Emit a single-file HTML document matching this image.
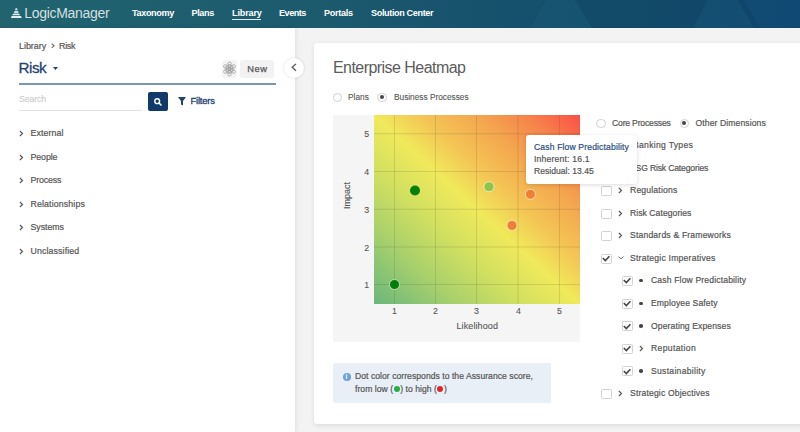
<!DOCTYPE html>
<html><head><meta charset="utf-8">
<style>
*{margin:0;padding:0;box-sizing:border-box}
html,body{width:800px;height:432px;overflow:hidden;background:#f3f3f3;font-family:"Liberation Sans",sans-serif}
.abs{position:absolute}
#hdr{left:0;top:0;width:800px;height:28px;background:linear-gradient(90deg,#21646f 0%,#1c5a6e 40%,#15506c 65%,#10486f 100%);overflow:hidden}
.nav{top:7.2px;font-size:9.1px;font-weight:bold;color:#fff;white-space:nowrap;line-height:12px;letter-spacing:-0.5px}
#left{left:0;top:28px;width:295px;height:404px;background:#fff;box-shadow:1px 0 5px rgba(0,0,0,0.09)}
.gray{color:#555}
.item{left:19px;font-size:8.8px;color:#555;line-height:12px;white-space:nowrap;-webkit-text-stroke:0.2px currentColor}
.item .chev{display:inline-block;width:11.5px}
#card{left:314px;top:42.5px;width:520px;height:381px;background:#fff;border-radius:3px;box-shadow:0 1.5px 5px rgba(0,0,0,0.09)}
.t9{font-size:8.6px;color:#555;white-space:nowrap;line-height:11px;-webkit-text-stroke:0.2px currentColor}
.radio{width:9.5px;height:9.5px;border:1px solid #d0d0d0;border-radius:50%;background:#fff}
.radio.on::after{content:"";position:absolute;left:1.75px;top:1.75px;width:4px;height:4px;border-radius:50%;background:#444}
.cb{width:10.5px;height:10px;border:1px solid #d2d2d2;border-radius:1.5px;background:#fff}
</style></head>
<body>
<div id="hdr" class="abs">
  <svg class="abs" style="left:0;top:0" width="800" height="28">
    <polygon points="546,0 575,0 592,28 531,28" fill="rgba(40,120,150,0.13)"/>
    <polygon points="708,0 738,0 754,28 693,28" fill="rgba(40,120,160,0.10)"/>
    <polygon points="575,0 708,0 693,28 592,28" fill="rgba(0,10,30,0.05)"/>
    <polygon points="738,0 800,0 800,28 754,28" fill="rgba(20,90,170,0.08)"/>
    <polygon points="738,0 744,0 760,28 754,28" fill="rgba(0,10,30,0.07)"/>
  </svg>
  <svg class="abs" style="left:10px;top:8px" width="13" height="11" viewBox="0 0 13 11">
    <polygon points="5.6,0.3 7.1,0.3 7.7,2.2 5,2.2" fill="#d8e6e6"/>
    <polygon points="4.5,2.9 8,2.9 8.8,5.2 3.7,5.2" fill="#c9dcdd"/>
    <polygon points="3,5.7 9.3,5.7 10.1,7.3 2.2,7.3" fill="#e3eeee"/>
    <polygon points="1.6,7.9 11,7.9 11.8,10 0.9,10" fill="#e3eeee"/>
  </svg>
  <div class="abs" style="left:24.3px;top:3.6px;font-size:14px;color:rgba(236,244,244,0.88);line-height:18px;letter-spacing:-0.316px">LogicManager</div>
  <div class="abs nav" style="left:132px;letter-spacing:-0.359px">Taxonomy</div>
  <div class="abs nav" style="left:191.5px;letter-spacing:-0.391px">Plans</div>
  <div class="abs nav" style="left:232px;letter-spacing:-0.157px">Library</div>
  <div class="abs" style="left:232px;top:19px;width:29px;height:1px;background:#dfe9ea"></div>
  <div class="abs nav" style="left:279px;letter-spacing:-0.486px">Events</div>
  <div class="abs nav" style="left:324px;letter-spacing:-0.316px">Portals</div>
  <div class="abs nav" style="left:371px;letter-spacing:-0.368px">Solution Center</div>
</div>

<div id="left" class="abs"></div>
<div class="abs" style="left:19px;top:40px;font-size:9px;line-height:12px;color:#555;letter-spacing:-0.05px;-webkit-text-stroke:0.2px #555">Library</div><svg class="abs" style="left:51.3px;top:43.2px" width="4" height="6" viewBox="0 0 4 6"><polyline points="0.7,0.7 3.1,2.75 0.7,4.8" fill="none" stroke="#666" stroke-width="1.05"/></svg><div class="abs" style="left:59px;top:40px;font-size:9px;line-height:12px;color:#555;letter-spacing:-0.35px;-webkit-text-stroke:0.2px #555">Risk</div>
<div class="abs" style="left:18.5px;top:58.8px;font-size:15.2px;line-height:18px;color:#1e4273;letter-spacing:-0.45px;-webkit-text-stroke:0.3px #1e4273">Risk</div>
<svg class="abs" style="left:53px;top:67px" width="6" height="4"><polygon points="0,0 5,0 2.5,3" fill="#1e4273"/></svg>
<div class="abs" style="left:222px;top:60px;width:15px;height:18px;background:#f4f4f4;border-radius:3px"></div>
<svg class="abs" style="left:222px;top:61px" width="15" height="16" viewBox="0 0 15 16"><g fill="none" stroke="#8a8a8a" stroke-width="0.6"><circle cx="7.50" cy="8.00" r="1.75"/><circle cx="7.50" cy="5.27" r="1.75"/><circle cx="5.36" cy="6.63" r="1.75"/><circle cx="5.36" cy="9.37" r="1.75"/><circle cx="7.50" cy="10.73" r="1.75"/><circle cx="9.64" cy="9.37" r="1.75"/><circle cx="9.64" cy="6.63" r="1.75"/><circle cx="7.50" cy="2.75" r="1.75"/><circle cx="3.39" cy="5.38" r="1.75"/><circle cx="3.39" cy="10.62" r="1.75"/><circle cx="7.50" cy="13.25" r="1.75"/><circle cx="11.61" cy="10.63" r="1.75"/><circle cx="11.61" cy="5.38" r="1.75"/></g></svg>
<div class="abs" style="left:239.5px;top:60px;width:34.5px;height:18px;background:#f2f2f2;border-radius:3px;font-size:9.3px;color:#555;text-align:center;line-height:18px;letter-spacing:0.55px;padding-left:1.2px;-webkit-text-stroke:0.25px #555">New</div>
<div class="abs" style="left:19px;top:83px;width:257px;height:1.5px;background:#7b95b5"></div>
<div class="abs" style="left:19px;top:93.3px;font-size:8.8px;line-height:12px;color:#c4c4c4;letter-spacing:-0.135px">Search</div>
<div class="abs" style="left:19px;top:110px;width:123px;height:1px;background:#e2e2e2"></div>
<div class="abs" style="left:148px;top:92px;width:20px;height:19px;background:#11396a;border-radius:2px"></div>
<svg class="abs" style="left:153px;top:97px" width="10" height="10" viewBox="0 0 10 10"><circle cx="4.2" cy="4.2" r="2.4" fill="none" stroke="#fff" stroke-width="1.4"/><line x1="6" y1="6" x2="8" y2="8" stroke="#fff" stroke-width="1.6" stroke-linecap="round"/></svg>
<svg class="abs" style="left:178px;top:96.5px" width="9" height="9" viewBox="0 0 9 9"><polygon points="0,0 8,0 5,4 5,8.5 3,7.5 3,4" fill="#1e4273"/></svg>
<div class="abs" style="left:190.5px;top:95px;font-size:9.3px;line-height:12px;color:#1e4273;-webkit-text-stroke:0.35px #1e4273;letter-spacing:-0.15px">Filters</div>

<div class="abs item" style="top:127px;left:30.5px;letter-spacing:0.088px">External</div>
<svg class="abs" style="left:18.8px;top:130.1px" width="5" height="7" viewBox="0 0 5 7"><polyline points="0.9,1 3.5,3.5 0.9,6" fill="none" stroke="#555" stroke-width="1.15"/></svg>
<div class="abs item" style="top:150.5px;left:30.5px;letter-spacing:-0.081px">People</div>
<svg class="abs" style="left:18.8px;top:153.6px" width="5" height="7" viewBox="0 0 5 7"><polyline points="0.9,1 3.5,3.5 0.9,6" fill="none" stroke="#555" stroke-width="1.15"/></svg>
<div class="abs item" style="top:174px;left:30.5px;letter-spacing:-0.130px">Process</div>
<svg class="abs" style="left:18.8px;top:177.1px" width="5" height="7" viewBox="0 0 5 7"><polyline points="0.9,1 3.5,3.5 0.9,6" fill="none" stroke="#555" stroke-width="1.15"/></svg>
<div class="abs item" style="top:197.5px;left:30.5px;letter-spacing:0.124px">Relationships</div>
<svg class="abs" style="left:18.8px;top:200.6px" width="5" height="7" viewBox="0 0 5 7"><polyline points="0.9,1 3.5,3.5 0.9,6" fill="none" stroke="#555" stroke-width="1.15"/></svg>
<div class="abs item" style="top:221px;left:30.5px;letter-spacing:-0.056px">Systems</div>
<svg class="abs" style="left:18.8px;top:224.1px" width="5" height="7" viewBox="0 0 5 7"><polyline points="0.9,1 3.5,3.5 0.9,6" fill="none" stroke="#555" stroke-width="1.15"/></svg>
<div class="abs item" style="top:244.5px;left:30.5px;letter-spacing:0.115px">Unclassified</div>
<svg class="abs" style="left:18.8px;top:247.6px" width="5" height="7" viewBox="0 0 5 7"><polyline points="0.9,1 3.5,3.5 0.9,6" fill="none" stroke="#555" stroke-width="1.15"/></svg>

<div class="abs" style="left:284px;top:58px;width:20px;height:20px;border-radius:50%;background:#fff;box-shadow:0 0 3px rgba(0,0,0,0.15)"></div>
<svg class="abs" style="left:290px;top:63px" width="8" height="9" viewBox="0 0 8 9"><polyline points="6,0.9 2.2,4.3 6,7.7" fill="none" stroke="#555" stroke-width="1.25"/></svg>

<div id="card" class="abs"></div>
<div class="abs" style="left:333px;top:57.6px;font-size:16px;line-height:20px;color:#5c5c5c;letter-spacing:-0.55px">Enterprise Heatmap</div>
<div class="abs radio" style="left:332.6px;top:92.6px"></div>
<div class="abs t9" style="left:348px;top:91.5px;font-size:8.3px;-webkit-text-stroke:0.1px #555;letter-spacing:0.009px">Plans</div>
<div class="abs radio on" style="left:377.1px;top:92.6px"></div>
<div class="abs t9" style="left:394px;top:91.5px;font-size:8.3px;-webkit-text-stroke:0.1px #555;letter-spacing:-0.010px">Business Processes</div>

<!-- chart -->
<div class="abs" style="left:332.5px;top:115px;width:247.5px;height:227px;background:#f5f5f5"></div>
<div class="abs" style="left:374px;top:115px;width:206px;height:189px;background:linear-gradient(to top right,#6ab67d 0%,#a8d06c 20%,#d2e060 36%,#f0e95b 50%,#f4c655 61%,#f4a84f 74%,#f6834b 87%,#fb4f47 100%)"></div>
<svg class="abs" style="left:374px;top:115px" width="206" height="189">
  <g stroke="rgba(70,70,40,0.16)" stroke-width="1">
    <line x1="20.5" y1="0" x2="20.5" y2="189"/>
    <line x1="61.5" y1="0" x2="61.5" y2="189"/>
    <line x1="102.5" y1="0" x2="102.5" y2="189"/>
    <line x1="144" y1="0" x2="144" y2="189"/>
    <line x1="185.5" y1="0" x2="185.5" y2="189"/>
    <line x1="0" y1="18.75" x2="206" y2="18.75"/>
    <line x1="0" y1="56.5" x2="206" y2="56.5"/>
    <line x1="0" y1="94.25" x2="206" y2="94.25"/>
    <line x1="0" y1="132" x2="206" y2="132"/>
    <line x1="0" y1="169.5" x2="206" y2="169.5"/>
  </g>
  <circle cx="20.5" cy="169.5" r="5" fill="#067f0a" stroke="rgba(255,255,255,0.6)" stroke-width="1"/>
  <circle cx="41" cy="75.5" r="5" fill="#067f0a"/>
  <circle cx="115" cy="71.7" r="5" fill="#8ec54a" stroke="rgba(255,255,255,0.6)" stroke-width="1"/>
  <circle cx="138" cy="110.4" r="5" fill="#ee7f33" stroke="rgba(255,255,255,0.6)" stroke-width="1"/>
  <circle cx="156.4" cy="79.3" r="5" fill="#ee7f33" stroke="rgba(255,255,255,0.6)" stroke-width="1"/>
</svg>
<div class="abs t9" style="left:364.3px;top:128.8px;font-size:8.8px;color:#555;-webkit-text-stroke:0.1px #555">5</div>
<div class="abs t9" style="left:364.3px;top:166.8px;font-size:8.8px;color:#555;-webkit-text-stroke:0.1px #555">4</div>
<div class="abs t9" style="left:364.3px;top:204.8px;font-size:8.8px;color:#555;-webkit-text-stroke:0.1px #555">3</div>
<div class="abs t9" style="left:364.3px;top:242.8px;font-size:8.8px;color:#555;-webkit-text-stroke:0.1px #555">2</div>
<div class="abs t9" style="left:364.3px;top:280.3px;font-size:8.8px;color:#555;-webkit-text-stroke:0.1px #555">1</div>
<div class="abs t9" style="left:392px;top:306px;font-size:8.8px;color:#555;-webkit-text-stroke:0.1px #555">1</div>
<div class="abs t9" style="left:433px;top:306px;font-size:8.8px;color:#555;-webkit-text-stroke:0.1px #555">2</div>
<div class="abs t9" style="left:474px;top:306px;font-size:8.8px;color:#555;-webkit-text-stroke:0.1px #555">3</div>
<div class="abs t9" style="left:516px;top:306px;font-size:8.8px;color:#555;-webkit-text-stroke:0.1px #555">4</div>
<div class="abs t9" style="left:557px;top:306px;font-size:8.8px;color:#555;-webkit-text-stroke:0.1px #555">5</div>
<div class="abs t9" style="left:456.5px;top:321px;font-size:9px;color:#555;-webkit-text-stroke:0.1px #555;letter-spacing:0.102px">Likelihood</div>
<div class="abs t9" style="left:333.2px;top:190px;width:28px;text-align:center;transform:rotate(-90deg);font-size:9px;color:#555;-webkit-text-stroke:0.1px #555">Impact</div>

<!-- right list -->
<div class="abs radio" style="left:596.1px;top:118.6px"></div>
<div class="abs t9" style="left:612px;top:117.5px;letter-spacing:-0.180px">Core Processes</div>
<div class="abs radio on" style="left:679.6px;top:118.6px"></div>
<div class="abs t9" style="left:695.5px;top:117.5px;letter-spacing:0.095px">Other Dimensions</div>

<div class="abs cb" style="left:601px;top:140px"></div>
<svg class="abs" style="left:617.8px;top:142.0px" width="5" height="7" viewBox="0 0 5 7"><polyline points="0.9,1 3.5,3.5 0.9,6" fill="none" stroke="#555" stroke-width="1.15"/></svg>
<div class="abs t9" style="left:633px;top:139.5px;letter-spacing:0.298px">Banking Types</div>
<div class="abs cb" style="left:601px;top:163px"></div>
<svg class="abs" style="left:617.8px;top:164.5px" width="5" height="7" viewBox="0 0 5 7"><polyline points="0.9,1 3.5,3.5 0.9,6" fill="none" stroke="#555" stroke-width="1.15"/></svg>
<div class="abs t9" style="left:630px;top:162.8px;letter-spacing:-0.161px">ESG Risk Categories</div>
<div class="abs cb" style="left:601px;top:185.5px"></div>
<svg class="abs" style="left:617.8px;top:187.0px" width="5" height="7" viewBox="0 0 5 7"><polyline points="0.9,1 3.5,3.5 0.9,6" fill="none" stroke="#555" stroke-width="1.15"/></svg>
<div class="abs t9" style="left:630px;top:184.5px;letter-spacing:0.181px">Regulations</div>
<div class="abs cb" style="left:601px;top:208.7px"></div>
<svg class="abs" style="left:617.8px;top:210.2px" width="5" height="7" viewBox="0 0 5 7"><polyline points="0.9,1 3.5,3.5 0.9,6" fill="none" stroke="#555" stroke-width="1.15"/></svg>
<div class="abs t9" style="left:630px;top:207.7px;letter-spacing:0.053px">Risk Categories</div>
<div class="abs cb" style="left:601px;top:230.5px"></div>
<svg class="abs" style="left:617.8px;top:232.0px" width="5" height="7" viewBox="0 0 5 7"><polyline points="0.9,1 3.5,3.5 0.9,6" fill="none" stroke="#555" stroke-width="1.15"/></svg>
<div class="abs t9" style="left:630px;top:229.5px;letter-spacing:0.183px">Standards &amp; Frameworks</div>
<div class="abs cb" style="left:601px;top:253.5px"></div>
<div class="abs t9" style="left:630px;top:252.5px;letter-spacing:0.224px">Strategic Imperatives</div>
<div class="abs cb" style="left:622px;top:275.5px"></div>
<div class="abs t9" style="left:651px;top:275px;letter-spacing:0.146px">Cash Flow Predictability</div>
<div class="abs cb" style="left:622px;top:298.5px"></div>
<div class="abs t9" style="left:651px;top:298px;letter-spacing:0.109px">Employee Safety</div>
<div class="abs cb" style="left:622px;top:321px"></div>
<div class="abs t9" style="left:651px;top:320.5px;letter-spacing:0.107px">Operating Expenses</div>
<div class="abs cb" style="left:622px;top:343.5px"></div>
<div class="abs t9" style="left:651px;top:343px;letter-spacing:0.358px">Reputation</div>
<div class="abs cb" style="left:622px;top:366px"></div>
<div class="abs t9" style="left:651px;top:365.5px;letter-spacing:0.281px">Sustainability</div>
<div class="abs cb" style="left:601px;top:388.5px"></div>
<svg class="abs" style="left:617.8px;top:390.0px" width="5" height="7" viewBox="0 0 5 7"><polyline points="0.9,1 3.5,3.5 0.9,6" fill="none" stroke="#555" stroke-width="1.15"/></svg>
<div class="abs t9" style="left:630px;top:387.5px;letter-spacing:0.162px">Strategic Objectives</div>

<svg class="abs" style="left:602px;top:254.0px" width="9" height="9" viewBox="0 0 9 9"><polyline points="0.8,4.0 3.3,6.6 7.4,2.2" fill="none" stroke="#444" stroke-width="1.55"/></svg>
<svg class="abs" style="left:623px;top:276.0px" width="9" height="9" viewBox="0 0 9 9"><polyline points="0.8,4.0 3.3,6.6 7.4,2.2" fill="none" stroke="#444" stroke-width="1.55"/></svg>
<svg class="abs" style="left:623px;top:299.0px" width="9" height="9" viewBox="0 0 9 9"><polyline points="0.8,4.0 3.3,6.6 7.4,2.2" fill="none" stroke="#444" stroke-width="1.55"/></svg>
<svg class="abs" style="left:623px;top:321.5px" width="9" height="9" viewBox="0 0 9 9"><polyline points="0.8,4.0 3.3,6.6 7.4,2.2" fill="none" stroke="#444" stroke-width="1.55"/></svg>
<svg class="abs" style="left:623px;top:344.0px" width="9" height="9" viewBox="0 0 9 9"><polyline points="0.8,4.0 3.3,6.6 7.4,2.2" fill="none" stroke="#444" stroke-width="1.55"/></svg>
<svg class="abs" style="left:623px;top:366.5px" width="9" height="9" viewBox="0 0 9 9"><polyline points="0.8,4.0 3.3,6.6 7.4,2.2" fill="none" stroke="#444" stroke-width="1.55"/></svg>
<div class="abs" style="left:639.2px;top:278.6px;width:3.6px;height:3.6px;border-radius:50%;background:#444"></div>
<div class="abs" style="left:639.2px;top:301.6px;width:3.6px;height:3.6px;border-radius:50%;background:#444"></div>
<div class="abs" style="left:639.2px;top:324.1px;width:3.6px;height:3.6px;border-radius:50%;background:#444"></div>
<div class="abs" style="left:639.2px;top:369.1px;width:3.6px;height:3.6px;border-radius:50%;background:#444"></div>
<svg class="abs" style="left:638.8px;top:345.0px" width="5" height="7" viewBox="0 0 5 7"><polyline points="0.9,1 3.5,3.5 0.9,6" fill="none" stroke="#555" stroke-width="1.15"/></svg>
<svg class="abs" style="left:618px;top:256.3px" width="6" height="4" viewBox="0 0 6 4"><polyline points="0.6,0.6 3,2.9 5.4,0.6" fill="none" stroke="#666" stroke-width="1"/></svg>
<!-- info -->
<div class="abs" style="left:332.5px;top:362.5px;width:218px;height:40px;background:#e9eff7;border-radius:2px"></div>
<div class="abs" style="left:342.5px;top:372.5px;width:8px;height:8px;border-radius:50%;background:#70a0d6;color:#fff;font-size:6.5px;font-weight:bold;text-align:center;line-height:8px">i</div>
<div class="abs t9" style="left:355px;top:371.4px;color:#555;letter-spacing:0.037px">Dot color corresponds to the Assurance score,</div>
<div class="abs t9" style="left:355px;top:383.7px;color:#555;letter-spacing:0.04px">from low (<span style="display:inline-block;width:6px;height:6px;margin:0 0.5px;border-radius:50%;background:#22b04a"></span>) to high (<span style="display:inline-block;width:6px;height:6px;margin:0 0.5px;border-radius:50%;background:#e0262d"></span>)</div>
<!-- tooltip -->
<div class="abs" style="left:525.5px;top:135px;width:111px;height:48.5px;background:#fff;border-radius:3px;box-shadow:0 1px 4px rgba(0,0,0,0.15)"></div>
<div class="abs t9" style="left:534px;top:142.2px;color:#2a4d7f;letter-spacing:0.137px">Cash Flow Predictability</div>
<div class="abs t9" style="left:534px;top:153.8px;letter-spacing:0.189px">Inherent: 16.1</div>
<div class="abs t9" style="left:534px;top:165.8px;letter-spacing:0.005px">Residual: 13.45</div>

</body></html>
